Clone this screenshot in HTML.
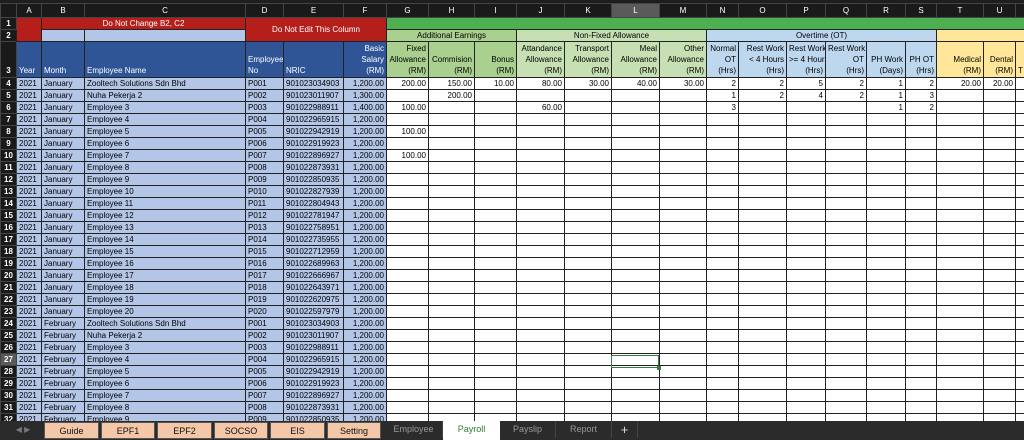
<!DOCTYPE html>
<html><head><meta charset="utf-8"><style>
*{margin:0;padding:0;box-sizing:border-box}
body{width:1024px;height:440px;overflow:hidden;background:#1e1e1e;font-family:"Liberation Sans",sans-serif;position:relative}
#wrap{position:absolute;left:0;top:3px;width:1024px;height:418px;overflow:hidden;background:#fff}
table{border-collapse:collapse;table-layout:fixed;width:1024px;font-size:8px;color:#000}
td{border:1px solid #222;padding:0 2px;height:12px;line-height:10px;white-space:nowrap;overflow:hidden;vertical-align:bottom}
tr.ch td{background:#1a1a1a;color:#fff;text-align:center;border-color:#444;height:14px;vertical-align:middle;font-size:8px}
td.n{background:#1a1a1a;color:#fff;border-color:#444;text-align:center;font-weight:bold;padding:0}
td.b{background:#b4c6e7}
.r{text-align:right}
.red{background:#b41f1b;color:#fff;text-align:center;vertical-align:middle}
.lb{background:#b4c6e7}
.hb{background:#2f5597;color:#fff}
.g1{background:#a9d08e}
.g2{background:#c6e0b4}
.bl{background:#bdd7ee}
.ye{background:#ffe699}
.gr{background:#4caf50}
.c{text-align:center;vertical-align:middle}
tr.h3 td{height:36px;line-height:11px;white-space:nowrap;padding-bottom:1px}
#sel{position:absolute;left:611px;top:355px;width:48px;height:13px;border:1.5px solid #3c7a45}
#sel:after{content:"";position:absolute;right:-3px;bottom:-3px;width:4px;height:4px;background:#3c7a45}
#tabs{position:absolute;left:0;top:421px;width:1024px;height:19px;background:#2b2b2b;font-size:9px}
.t{position:absolute;top:0;height:17px;line-height:17px;text-align:center}
.p{background:#f4c7a8;color:#111;border:1px solid #555;top:1px}
.d{color:#9a9a9a;border-right:1px solid #444}
</style></head><body>
<div id="wrap">
<table>
<colgroup><col style="width:16px"><col style="width:25px"><col style="width:43px"><col style="width:161px"><col style="width:38px"><col style="width:60px"><col style="width:43px"><col style="width:42px"><col style="width:46px"><col style="width:42px"><col style="width:48px"><col style="width:47px"><col style="width:48px"><col style="width:47px"><col style="width:32px"><col style="width:48px"><col style="width:39px"><col style="width:41px"><col style="width:39px"><col style="width:31px"><col style="width:47px"><col style="width:32px"><col style="width:9px"></colgroup>
<tr class="ch"><td></td><td>A</td><td>B</td><td>C</td><td>D</td><td>E</td><td>F</td><td>G</td><td>H</td><td>I</td><td>J</td><td>K</td><td style="background:#5a5a5a">L</td><td>M</td><td>N</td><td>O</td><td>P</td><td>Q</td><td>R</td><td>S</td><td>T</td><td>U</td><td></td></tr>
<tr><td class="n c">1</td><td class="red" rowspan="2"></td><td class="red" colspan="2">Do Not Change B2, C2</td><td class="red" colspan="3" rowspan="2">Do Not Edit This Column</td><td class="gr" colspan="16"></td></tr>
<tr><td class="n c">2</td><td class="lb"></td><td class="lb"></td><td class="g1 c" colspan="3">Additional Earnings</td><td class="g2 c" colspan="4">Non-Fixed Allowance</td><td class="bl c" colspan="6">Overtime (OT)</td><td class="ye" colspan="3"></td></tr>
<tr class="h3"><td class="n">3</td><td class="hb">Year</td><td class="hb">Month</td><td class="hb">Employee Name</td><td class="hb">Employee<br>No</td><td class="hb">NRIC</td><td class="hb r">Basic<br>Salary<br>(RM)</td><td class="g1 r">Fixed<br>Allowance<br>(RM)</td><td class="g1 r">Commision<br>(RM)</td><td class="g1 r">Bonus<br>(RM)</td><td class="g2 r">Attandance<br>Allowance<br>(RM)</td><td class="g2 r">Transport<br>Allowance<br>(RM)</td><td class="g2 r">Meal<br>Allowance<br>(RM)</td><td class="g2 r">Other<br>Allowance<br>(RM)</td><td class="bl r">Normal<br>OT<br>(Hrs)</td><td class="bl r">Rest Work<br>&lt; 4 Hours<br>(Hrs)</td><td class="bl r">Rest Work<br>&gt;= 4 Hours<br>(Hrs)</td><td class="bl r">Rest Work<br>OT<br>(Hrs)</td><td class="bl r">PH Work<br>(Days)</td><td class="bl r">PH OT<br>(Hrs)</td><td class="ye r">Medical<br>(RM)</td><td class="ye r">Dental<br>(RM)</td><td class="ye">T</td></tr>
<tr><td class="n">4</td><td class="b">2021</td><td class="b">January</td><td class="b">Zooltech Solutions Sdn Bhd</td><td class="b">P001</td><td class="b">901023034903</td><td class="b r">1,200.00</td><td class="r">200.00</td><td class="r">150.00</td><td class="r">10.00</td><td class="r">80.00</td><td class="r">30.00</td><td class="r">40.00</td><td class="r">30.00</td><td class="r">2</td><td class="r">2</td><td class="r">5</td><td class="r">2</td><td class="r">1</td><td class="r">2</td><td class="r">20.00</td><td class="r">20.00</td><td></td></tr>
<tr><td class="n">5</td><td class="b">2021</td><td class="b">January</td><td class="b">Nuha Pekerja 2</td><td class="b">P002</td><td class="b">901023011907</td><td class="b r">1,300.00</td><td></td><td class="r">200.00</td><td></td><td></td><td></td><td></td><td></td><td class="r">1</td><td class="r">2</td><td class="r">4</td><td class="r">2</td><td class="r">1</td><td class="r">3</td><td></td><td></td><td></td></tr>
<tr><td class="n">6</td><td class="b">2021</td><td class="b">January</td><td class="b">Employee 3</td><td class="b">P003</td><td class="b">901022988911</td><td class="b r">1,400.00</td><td class="r">100.00</td><td></td><td></td><td class="r">60.00</td><td></td><td></td><td></td><td class="r">3</td><td></td><td></td><td></td><td class="r">1</td><td class="r">2</td><td></td><td></td><td></td></tr>
<tr><td class="n">7</td><td class="b">2021</td><td class="b">January</td><td class="b">Employee 4</td><td class="b">P004</td><td class="b">901022965915</td><td class="b r">1,200.00</td><td></td><td></td><td></td><td></td><td></td><td></td><td></td><td></td><td></td><td></td><td></td><td></td><td></td><td></td><td></td><td></td></tr>
<tr><td class="n">8</td><td class="b">2021</td><td class="b">January</td><td class="b">Employee 5</td><td class="b">P005</td><td class="b">901022942919</td><td class="b r">1,200.00</td><td class="r">100.00</td><td></td><td></td><td></td><td></td><td></td><td></td><td></td><td></td><td></td><td></td><td></td><td></td><td></td><td></td><td></td></tr>
<tr><td class="n">9</td><td class="b">2021</td><td class="b">January</td><td class="b">Employee 6</td><td class="b">P006</td><td class="b">901022919923</td><td class="b r">1,200.00</td><td></td><td></td><td></td><td></td><td></td><td></td><td></td><td></td><td></td><td></td><td></td><td></td><td></td><td></td><td></td><td></td></tr>
<tr><td class="n">10</td><td class="b">2021</td><td class="b">January</td><td class="b">Employee 7</td><td class="b">P007</td><td class="b">901022896927</td><td class="b r">1,200.00</td><td class="r">100.00</td><td></td><td></td><td></td><td></td><td></td><td></td><td></td><td></td><td></td><td></td><td></td><td></td><td></td><td></td><td></td></tr>
<tr><td class="n">11</td><td class="b">2021</td><td class="b">January</td><td class="b">Employee 8</td><td class="b">P008</td><td class="b">901022873931</td><td class="b r">1,200.00</td><td></td><td></td><td></td><td></td><td></td><td></td><td></td><td></td><td></td><td></td><td></td><td></td><td></td><td></td><td></td><td></td></tr>
<tr><td class="n">12</td><td class="b">2021</td><td class="b">January</td><td class="b">Employee 9</td><td class="b">P009</td><td class="b">901022850935</td><td class="b r">1,200.00</td><td></td><td></td><td></td><td></td><td></td><td></td><td></td><td></td><td></td><td></td><td></td><td></td><td></td><td></td><td></td><td></td></tr>
<tr><td class="n">13</td><td class="b">2021</td><td class="b">January</td><td class="b">Employee 10</td><td class="b">P010</td><td class="b">901022827939</td><td class="b r">1,200.00</td><td></td><td></td><td></td><td></td><td></td><td></td><td></td><td></td><td></td><td></td><td></td><td></td><td></td><td></td><td></td><td></td></tr>
<tr><td class="n">14</td><td class="b">2021</td><td class="b">January</td><td class="b">Employee 11</td><td class="b">P011</td><td class="b">901022804943</td><td class="b r">1,200.00</td><td></td><td></td><td></td><td></td><td></td><td></td><td></td><td></td><td></td><td></td><td></td><td></td><td></td><td></td><td></td><td></td></tr>
<tr><td class="n">15</td><td class="b">2021</td><td class="b">January</td><td class="b">Employee 12</td><td class="b">P012</td><td class="b">901022781947</td><td class="b r">1,200.00</td><td></td><td></td><td></td><td></td><td></td><td></td><td></td><td></td><td></td><td></td><td></td><td></td><td></td><td></td><td></td><td></td></tr>
<tr><td class="n">16</td><td class="b">2021</td><td class="b">January</td><td class="b">Employee 13</td><td class="b">P013</td><td class="b">901022758951</td><td class="b r">1,200.00</td><td></td><td></td><td></td><td></td><td></td><td></td><td></td><td></td><td></td><td></td><td></td><td></td><td></td><td></td><td></td><td></td></tr>
<tr><td class="n">17</td><td class="b">2021</td><td class="b">January</td><td class="b">Employee 14</td><td class="b">P014</td><td class="b">901022735955</td><td class="b r">1,200.00</td><td></td><td></td><td></td><td></td><td></td><td></td><td></td><td></td><td></td><td></td><td></td><td></td><td></td><td></td><td></td><td></td></tr>
<tr><td class="n">18</td><td class="b">2021</td><td class="b">January</td><td class="b">Employee 15</td><td class="b">P015</td><td class="b">901022712959</td><td class="b r">1,200.00</td><td></td><td></td><td></td><td></td><td></td><td></td><td></td><td></td><td></td><td></td><td></td><td></td><td></td><td></td><td></td><td></td></tr>
<tr><td class="n">19</td><td class="b">2021</td><td class="b">January</td><td class="b">Employee 16</td><td class="b">P016</td><td class="b">901022689963</td><td class="b r">1,200.00</td><td></td><td></td><td></td><td></td><td></td><td></td><td></td><td></td><td></td><td></td><td></td><td></td><td></td><td></td><td></td><td></td></tr>
<tr><td class="n">20</td><td class="b">2021</td><td class="b">January</td><td class="b">Employee 17</td><td class="b">P017</td><td class="b">901022666967</td><td class="b r">1,200.00</td><td></td><td></td><td></td><td></td><td></td><td></td><td></td><td></td><td></td><td></td><td></td><td></td><td></td><td></td><td></td><td></td></tr>
<tr><td class="n">21</td><td class="b">2021</td><td class="b">January</td><td class="b">Employee 18</td><td class="b">P018</td><td class="b">901022643971</td><td class="b r">1,200.00</td><td></td><td></td><td></td><td></td><td></td><td></td><td></td><td></td><td></td><td></td><td></td><td></td><td></td><td></td><td></td><td></td></tr>
<tr><td class="n">22</td><td class="b">2021</td><td class="b">January</td><td class="b">Employee 19</td><td class="b">P019</td><td class="b">901022620975</td><td class="b r">1,200.00</td><td></td><td></td><td></td><td></td><td></td><td></td><td></td><td></td><td></td><td></td><td></td><td></td><td></td><td></td><td></td><td></td></tr>
<tr><td class="n">23</td><td class="b">2021</td><td class="b">January</td><td class="b">Employee 20</td><td class="b">P020</td><td class="b">901022597979</td><td class="b r">1,200.00</td><td></td><td></td><td></td><td></td><td></td><td></td><td></td><td></td><td></td><td></td><td></td><td></td><td></td><td></td><td></td><td></td></tr>
<tr><td class="n">24</td><td class="b">2021</td><td class="b">February</td><td class="b">Zooltech Solutions Sdn Bhd</td><td class="b">P001</td><td class="b">901023034903</td><td class="b r">1,200.00</td><td></td><td></td><td></td><td></td><td></td><td></td><td></td><td></td><td></td><td></td><td></td><td></td><td></td><td></td><td></td><td></td></tr>
<tr><td class="n">25</td><td class="b">2021</td><td class="b">February</td><td class="b">Nuha Pekerja 2</td><td class="b">P002</td><td class="b">901023011907</td><td class="b r">1,200.00</td><td></td><td></td><td></td><td></td><td></td><td></td><td></td><td></td><td></td><td></td><td></td><td></td><td></td><td></td><td></td><td></td></tr>
<tr><td class="n">26</td><td class="b">2021</td><td class="b">February</td><td class="b">Employee 3</td><td class="b">P003</td><td class="b">901022988911</td><td class="b r">1,200.00</td><td></td><td></td><td></td><td></td><td></td><td></td><td></td><td></td><td></td><td></td><td></td><td></td><td></td><td></td><td></td><td></td></tr>
<tr><td class="n" style="background:#5a5a5a">27</td><td class="b">2021</td><td class="b">February</td><td class="b">Employee 4</td><td class="b">P004</td><td class="b">901022965915</td><td class="b r">1,200.00</td><td></td><td></td><td></td><td></td><td></td><td></td><td></td><td></td><td></td><td></td><td></td><td></td><td></td><td></td><td></td><td></td></tr>
<tr><td class="n">28</td><td class="b">2021</td><td class="b">February</td><td class="b">Employee 5</td><td class="b">P005</td><td class="b">901022942919</td><td class="b r">1,200.00</td><td></td><td></td><td></td><td></td><td></td><td></td><td></td><td></td><td></td><td></td><td></td><td></td><td></td><td></td><td></td><td></td></tr>
<tr><td class="n">29</td><td class="b">2021</td><td class="b">February</td><td class="b">Employee 6</td><td class="b">P006</td><td class="b">901022919923</td><td class="b r">1,200.00</td><td></td><td></td><td></td><td></td><td></td><td></td><td></td><td></td><td></td><td></td><td></td><td></td><td></td><td></td><td></td><td></td></tr>
<tr><td class="n">30</td><td class="b">2021</td><td class="b">February</td><td class="b">Employee 7</td><td class="b">P007</td><td class="b">901022896927</td><td class="b r">1,200.00</td><td></td><td></td><td></td><td></td><td></td><td></td><td></td><td></td><td></td><td></td><td></td><td></td><td></td><td></td><td></td><td></td></tr>
<tr><td class="n">31</td><td class="b">2021</td><td class="b">February</td><td class="b">Employee 8</td><td class="b">P008</td><td class="b">901022873931</td><td class="b r">1,200.00</td><td></td><td></td><td></td><td></td><td></td><td></td><td></td><td></td><td></td><td></td><td></td><td></td><td></td><td></td><td></td><td></td></tr>
<tr><td class="n">32</td><td class="b">2021</td><td class="b">February</td><td class="b">Employee 9</td><td class="b">P009</td><td class="b">901022850935</td><td class="b r">1,200.00</td><td></td><td></td><td></td><td></td><td></td><td></td><td></td><td></td><td></td><td></td><td></td><td></td><td></td><td></td><td></td><td></td></tr>
</table>
</div>
<div id="sel"></div>
<div id="tabs">
<div class="t" style="left:8px;width:30px;color:#777;font-size:8px">◀ ▶</div>
<div class="t p" style="left:44px;width:55px">Guide</div>
<div class="t p" style="left:101px;width:54px">EPF1</div>
<div class="t p" style="left:157px;width:55px">EPF2</div>
<div class="t p" style="left:214px;width:54px">SOCSO</div>
<div class="t p" style="left:270px;width:55px">EIS</div>
<div class="t p" style="left:327px;width:54px">Setting</div>
<div class="t d" style="left:385px;width:58px">Employee</div>
<div class="t" style="left:443px;width:57px;background:#fff;color:#2e7d32;height:19px">Payroll</div>
<div class="t d" style="left:500px;width:56px">Payslip</div>
<div class="t d" style="left:556px;width:56px">Report</div>
<div class="t d" style="left:612px;width:26px;color:#ddd;font-size:13px">+</div>
</div>
</body></html>
